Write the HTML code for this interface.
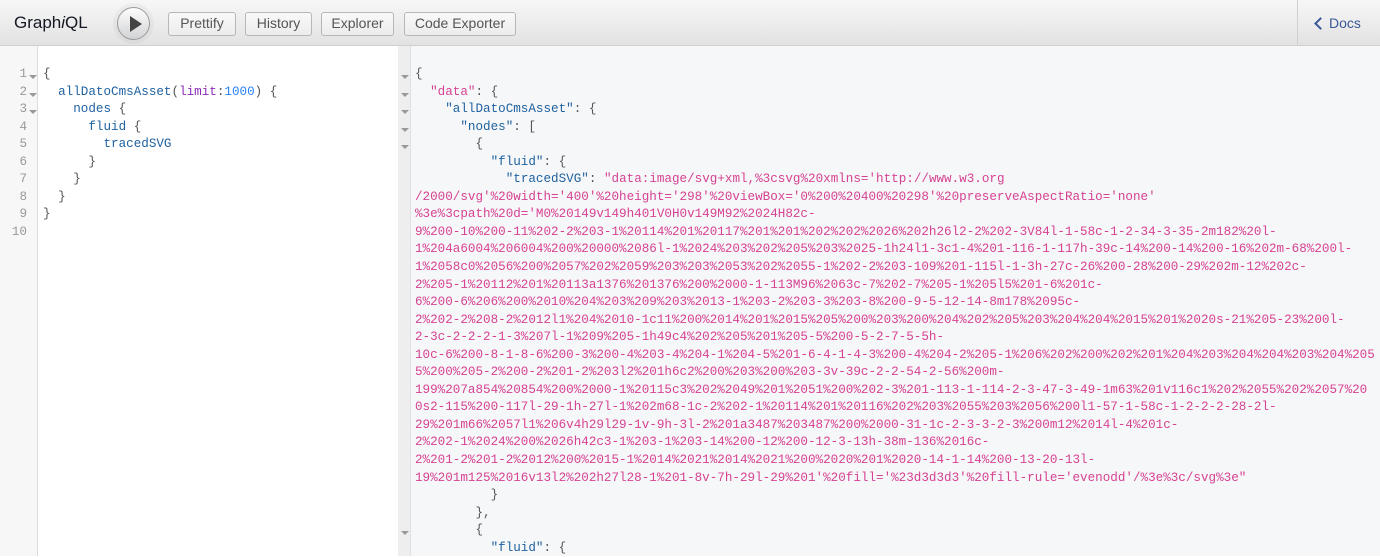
<!DOCTYPE html>
<html><head><meta charset="utf-8"><style>
*{margin:0;padding:0;box-sizing:border-box}
body{width:1380px;height:556px;overflow:hidden;background:#fff;font-family:"Liberation Sans",sans-serif;position:relative}
.top{position:absolute;left:0;top:0;width:1380px;height:46px;background:linear-gradient(#f7f7f7,#e2e2e2);border-bottom:1px solid #d0d0d0}
.title{position:absolute;left:14px;top:13px;font-size:17px;color:#141823}
.run{position:absolute;left:117px;top:7px;width:33px;height:33px;border-radius:50%;background:linear-gradient(#fdfdfd,#d2d3d6);border:1px solid #9a9a9a;box-shadow:0 0 0 4px rgba(0,0,0,0.03)}
.run:after{content:"";position:absolute;left:12px;top:8px;border-left:12px solid #444;border-top:8px solid transparent;border-bottom:8px solid transparent}
.btn{position:absolute;top:12px;height:24px;border:1px solid #b7b7b7;border-radius:3px;background:linear-gradient(#f9f9f9,#ececec);font-size:14px;color:#555;text-align:center;line-height:21px}
.docs{position:absolute;left:1297px;top:0;width:83px;height:46px;border-left:1px solid #d0d0d0;color:#3b5998;font-size:14px;padding:15px 0 0 17px}
.docs:before{content:"";position:absolute;left:18px;top:19px;width:7px;height:7px;border-left:2px solid #3b5998;border-bottom:2px solid #3b5998;transform:rotate(45deg)}
.docs span{margin-left:14px}
.gut{position:absolute;left:0;top:46px;width:38px;height:510px;background:#f7f7f7;border-right:1px solid #ddd}
.res{position:absolute;left:398px;top:46px;width:982px;height:510px;background:#f6f7f8;border-left:1px solid #e0e0e0}
.rgut{position:absolute;left:398px;top:46px;width:13px;height:510px;background:#eeeeee;border-right:1px solid #e0e0e0}
pre{position:absolute;font-family:"Liberation Mono",monospace;font-size:12.6px;line-height:17.55px;white-space:pre}
.ln{left:0;top:66px;width:27px;text-align:right;color:#999}
.q{left:43px;top:66px;color:#555}
.r{left:415px;top:66px;color:#555}
.f{color:#1f61a0}.a{color:#8b2bb9}.n{color:#2882f9}.k{color:#d64292}.s{color:#d64292}.p{color:#555}.kk{color:#1f61a0}
.ar{position:absolute;width:0;height:0;border-left:4px solid transparent;border-right:4px solid transparent;border-top:4px solid #999}
</style></head><body>
<div class="top">
<div class="title">Graph<i>i</i>QL</div>
<div class="run"></div>
<div class="btn" style="left:168px;width:68px">Prettify</div>
<div class="btn" style="left:245px;width:67px">History</div>
<div class="btn" style="left:321px;width:73px">Explorer</div>
<div class="btn" style="left:404px;width:112px">Code Exporter</div>
<div class="docs"><span>Docs</span></div>
</div>
<div class="gut"></div>
<pre class="ln">1
2
3
4
5
6
7
8
9
10</pre>
<div class="ar" style="left:29px;top:75px"></div>
<div class="ar" style="left:29px;top:93px"></div>
<div class="ar" style="left:29px;top:110px"></div>
<pre class="q">{
  <span class="f">allDatoCmsAsset</span>(<span class="a">limit</span>:<span class="n">1000</span>) {
    <span class="f">nodes</span> {
      <span class="f">fluid</span> {
        <span class="f">tracedSVG</span>
      }
    }
  }
}</pre>
<div class="res"></div>
<div class="rgut"></div>
<div class="ar" style="left:401px;top:75px"></div>
<div class="ar" style="left:401px;top:93px"></div>
<div class="ar" style="left:401px;top:110px"></div>
<div class="ar" style="left:401px;top:128px"></div>
<div class="ar" style="left:401px;top:145px"></div>
<div class="ar" style="left:401px;top:531px"></div>
<pre class="r">{
  <span class="k">"data"</span>: {
    <span class="kk">"allDatoCmsAsset"</span>: {
      <span class="kk">"nodes"</span>: [
        {
          <span class="kk">"fluid"</span>: {
            <span class="kk">"tracedSVG"</span>: <span class="s">"data:image/svg+xml,%3csvg%20xmlns='http://www.w3.org</span>
<span class="s">/2000/svg'%20width='400'%20height='298'%20viewBox='0%200%20400%20298'%20preserveAspectRatio='none'
%3e%3cpath%20d='M0%20149v149h401V0H0v149M92%2024H82c-
9%200-10%200-11%202-2%203-1%20114%201%20117%201%201%202%202%2026%202h26l2-2%202-3V84l-1-58c-1-2-34-3-35-2m182%20l-
1%204a6004%206004%200%20000%2086l-1%2024%203%202%205%203%2025-1h24l1-3c1-4%201-116-1-117h-39c-14%200-14%200-16%202m-68%200l-
1%2058c0%2056%200%2057%202%2059%203%203%2053%202%2055-1%202-2%203-109%201-115l-1-3h-27c-26%200-28%200-29%202m-12%202c-
2%205-1%20112%201%20113a1376%201376%200%2000-1-113M96%2063c-7%202-7%205-1%205l5%201-6%201c-
6%200-6%206%200%2010%204%203%209%203%2013-1%203-2%203-3%203-8%200-9-5-12-14-8m178%2095c-
2%202-2%208-2%2012l1%204%2010-1c11%200%2014%201%2015%205%200%203%200%204%202%205%203%204%204%2015%201%2020s-21%205-23%200l-
2-3c-2-2-2-1-3%207l-1%209%205-1h49c4%202%205%201%205-5%200-5-2-7-5-5h-
10c-6%200-8-1-8-6%200-3%200-4%203-4%204-1%204-5%201-6-4-1-4-3%200-4%204-2%205-1%206%202%200%202%201%204%203%204%204%203%204%205
5%200%205-2%200-2%201-2%203l2%201h6c2%200%203%200%203-3v-39c-2-2-54-2-56%200m-
199%207a854%20854%200%2000-1%20115c3%202%2049%201%2051%200%202-3%201-113-1-114-2-3-47-3-49-1m63%201v116c1%202%2055%202%2057%20
0s2-115%200-117l-29-1h-27l-1%202m68-1c-2%202-1%20114%201%20116%202%203%2055%203%2056%200l1-57-1-58c-1-2-2-2-28-2l-
29%201m66%2057l1%206v4h29l29-1v-9h-3l-2%201a3487%203487%200%2000-31-1c-2-3-3-2-3%200m12%2014l-4%201c-
2%202-1%2024%200%2026h42c3-1%203-1%203-14%200-12%200-12-3-13h-38m-136%2016c-
2%201-2%201-2%2012%200%2015-1%2014%2021%2014%2021%200%2020%201%2020-14-1-14%200-13-20-13l-
19%201m125%2016v13l2%202h27l28-1%201-8v-7h-29l-29%201'%20fill='%23d3d3d3'%20fill-rule='evenodd'/%3e%3c/svg%3e"</span>
          }
        },
        {
          <span class="kk">"fluid"</span>: {</pre>
</body></html>
